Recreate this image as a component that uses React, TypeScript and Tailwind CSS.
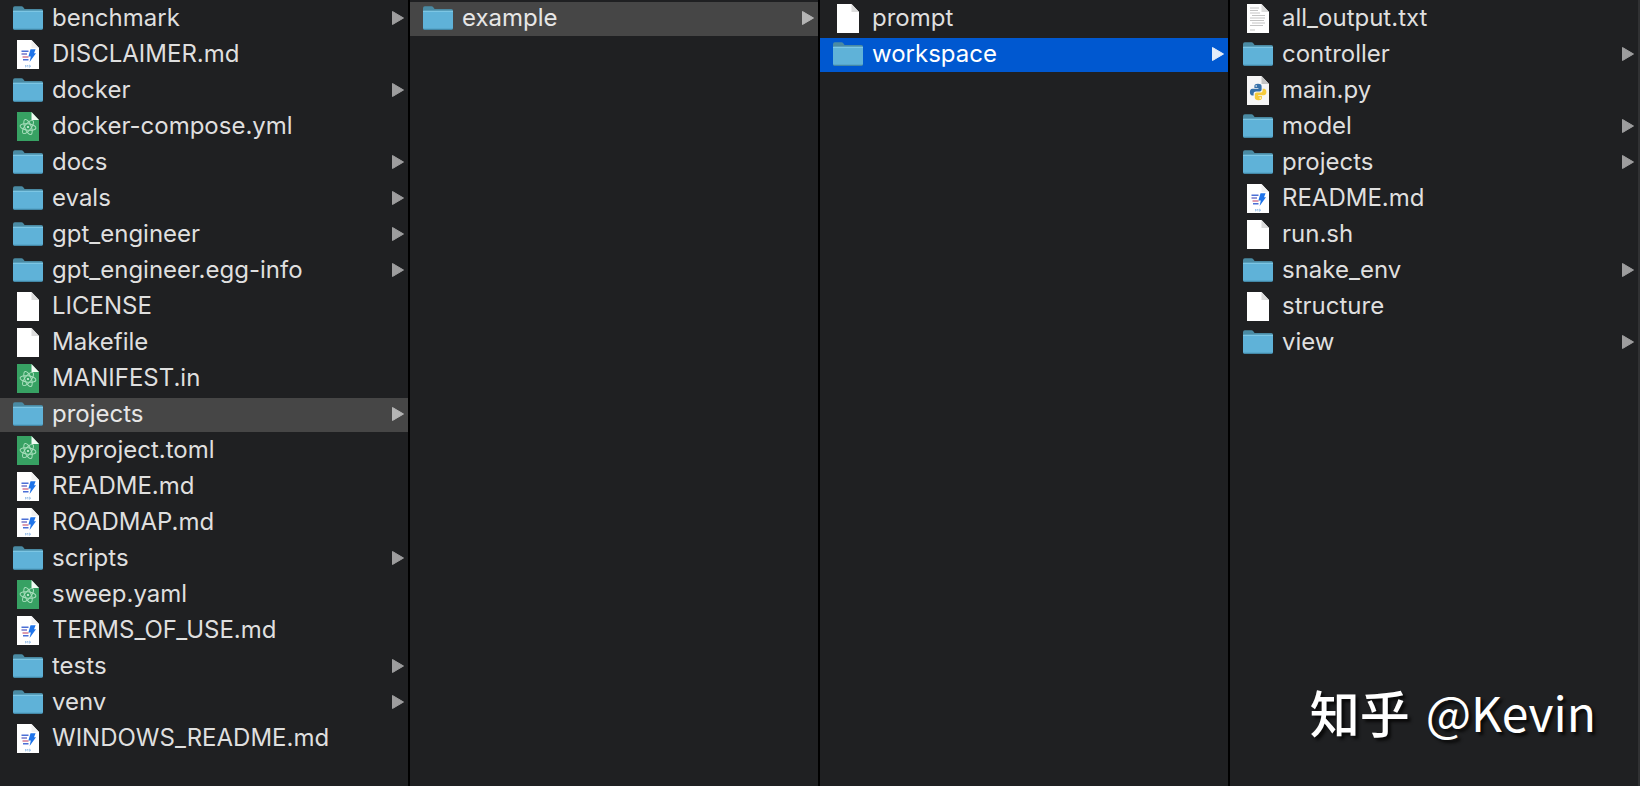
import type { ReactNode } from "react";

type Kind = "folder" | "file" | "md" | "atom" | "text" | "python";
type Entry = { name: string; kind: Kind; state?: "open" | "active" };

const d = (name: string, state?: "open" | "active"): Entry => ({ name, kind: "folder", state });
const f = (name: string, kind: Kind = "file"): Entry => ({ name, kind });

const columns: { label: string; entries: Entry[] }[] = [
  {
    label: "gpt-engineer",
    entries: [
      d("benchmark"),
      f("DISCLAIMER.md", "md"),
      d("docker"),
      f("docker-compose.yml", "atom"),
      d("docs"),
      d("evals"),
      d("gpt_engineer"),
      d("gpt_engineer.egg-info"),
      f("LICENSE"),
      f("Makefile"),
      f("MANIFEST.in", "atom"),
      d("projects", "open"),
      f("pyproject.toml", "atom"),
      f("README.md", "md"),
      f("ROADMAP.md", "md"),
      d("scripts"),
      f("sweep.yaml", "atom"),
      f("TERMS_OF_USE.md", "md"),
      d("tests"),
      d("venv"),
      f("WINDOWS_README.md", "md"),
    ],
  },
  { label: "projects", entries: [d("example", "open")] },
  { label: "example", entries: [f("prompt"), d("workspace", "active")] },
  {
    label: "workspace",
    entries: [
      f("all_output.txt", "text"),
      d("controller"),
      f("main.py", "python"),
      d("model"),
      d("projects"),
      f("README.md", "md"),
      f("run.sh"),
      d("snake_env"),
      f("structure"),
      d("view"),
    ],
  },
];

function Folder() {
  return (
    <svg viewBox="0 0 30 24" className="h-6 w-[30px]" aria-hidden="true">
      <path d="M0 2.2Q0 .3 1.8.3H8.4Q9.6.3 10.3 1.3L11.6 2.9H28.4Q30 2.9 30 4.4V8H0Z" fill="#4a8aa3" />
      <rect y="5" width="30" height="19" rx="1.4" fill="#4387a6" />
      <rect y="4.8" width="30" height="18" rx="1" fill="#5fb2d8" />
      <rect y="4.8" width="30" height="1.2" fill="#7cc6e4" />
    </svg>
  );
}

function Page({ fill = "#ffffff", fold = "#dcdcdc", children }: { fill?: string; fold?: string; children?: ReactNode }) {
  return (
    <svg viewBox="0 0 22 29" className="h-[29px] w-[22px]" aria-hidden="true">
      <path d="M0 0H14.5L22 8V29H0Z" fill={fill} />
      {children}
      <path d="M14.5 0V8H22Z" fill={fold} />
    </svg>
  );
}

function Icon({ kind }: { kind: Kind }) {
  switch (kind) {
    case "folder":
      return <Folder />;
    case "md":
      return (
        <Page fold="#f1f1f1">
          <g strokeWidth="1.4" fill="none">
            <path d="M4.5 11.2H11.5M6 19.8H11.5" stroke="#4b6fd6" />
            <path d="M4.5 14H10" stroke="#6a6cc4" />
            <path d="M5.5 17H11.5" stroke="#d0708a" />
          </g>
          <path d="M13.5 9.2H18.6L17 13.2H19L12.6 22L13.8 16.6H11.4Z" fill="#1f74ea" />
          <path d="M8.5 27.4V25L9.7 26.4L10.9 25V27.4M12.6 25V27.4Q15 26.2 12.6 25Z" stroke="#93bde8" strokeWidth=".8" fill="none" />
        </Page>
      );
    case "atom":
      return (
        <Page fill="#37a163" fold="#f0faf3">
          <g fill="none" stroke="#a9dfbd" strokeWidth="1">
            <ellipse cx="11" cy="15" rx="8" ry="3.2" transform="rotate(8 11 15)" />
            <ellipse cx="11" cy="15" rx="8" ry="3.2" transform="rotate(68 11 15)" />
            <ellipse cx="11" cy="15" rx="8" ry="3.2" transform="rotate(128 11 15)" />
          </g>
          <circle cx="11" cy="15" r="1.1" fill="#d6f3df" />
        </Page>
      );
    case "text":
      return (
        <Page>
          <path
            d="M3 4H12M3 6.5H11M3 9H13M5 11.5H18M3 14H18M3 16.5H17M5 19H18M3 21.5H16M3 26H8"
            stroke="#bdbdbd"
            strokeWidth=".9"
          />
        </Page>
      );
    case "python":
      return (
        <Page fill="#f6f6f6" fold="#c4c4c4">
          <path
            d="M11 7.8C8 7.8 7.4 9 7.4 10.2V12H11.4V12.8H5.4C3.6 12.8 2.9 14.4 2.9 16.2S3.8 19.4 5.2 19.4H6.6V17.6C6.6 16.2 7.8 15.4 9 15.4H12.6C13.8 15.4 14.6 14.4 14.6 13.4V10.2C14.6 8.6 13.2 7.8 11 7.8Z"
            fill="#3670a8"
          />
          <path
            d="M11.4 24.2C14.2 24.2 14.9 23 14.9 21.8V20H11.2V19.2H16.8C18.6 19.2 19.4 17.8 19.4 16S18.4 12.8 17.2 12.8H15.6V14.4C15.6 15.8 14.6 16.4 13.4 16.4H9.8C8.4 16.4 7.8 17.4 7.8 18.4V21.8C7.8 23.2 9.2 24.2 11.4 24.2Z"
            fill="#f5cb3c"
          />
          <circle cx="9.2" cy="10" r=".8" fill="#fff" />
          <circle cx="13.2" cy="22" r=".8" fill="#fff" />
        </Page>
      );
    default:
      return <Page />;
  }
}

const rowStyle = {
  open: "bg-[#464646] text-[#e6e6e6]",
  active: "bg-[#0058d0] text-white",
  plain: "text-[#dfdfdf]",
};

const arrowStyle = { open: "text-[#b4b4b4]", active: "text-[#e3ecf9]", plain: "text-[#9d9d9e]" };

function Row({ entry }: { entry: Entry }) {
  const state = entry.state ?? "plain";
  return (
    <li>
      <button
        type="button"
        className={`flex h-[34px] w-full items-center gap-2 pr-1 pb-[2px] pl-3 text-left text-2xl leading-8 ${rowStyle[state]}`}
      >
        <span className="flex w-8 shrink-0 justify-center">
          <Icon kind={entry.kind} />
        </span>
        <span className="min-w-0 flex-1 truncate">{entry.name}</span>
        {entry.kind === "folder" && (
          <svg viewBox="0 0 12 14" className={`h-[14px] w-3 shrink-0 ${arrowStyle[state]}`} aria-hidden="true">
            <path d="M.5.5L11.5 7L.5 13.5Z" fill="currentColor" stroke="currentColor" strokeLinejoin="round" />
          </svg>
        )}
      </button>
    </li>
  );
}

export default function App() {
  return (
    <main className="relative grid min-h-screen grid-cols-4 bg-[#1f2022] font-['Inter','Liberation_Sans',sans-serif]">
      {columns.map((column) => (
        <ul
          key={column.label}
          aria-label={column.label}
          className="flex min-w-0 flex-col gap-[2px] border-r-2 border-black pt-[2px] last-of-type:border-[#303133]"
        >
          {column.entries.map((entry) => (
            <Row key={entry.name} entry={entry} />
          ))}
        </ul>
      ))}
      <p className="absolute right-11 bottom-[50px] flex items-center gap-4 font-['Noto_Sans_CJK_SC',sans-serif] text-5xl text-white [text-shadow:3px_3px_3px_#0a0a0a]">
        <span className="text-[50px] font-medium">知乎</span>
        <span>@Kevin</span>
      </p>
    </main>
  );
}
